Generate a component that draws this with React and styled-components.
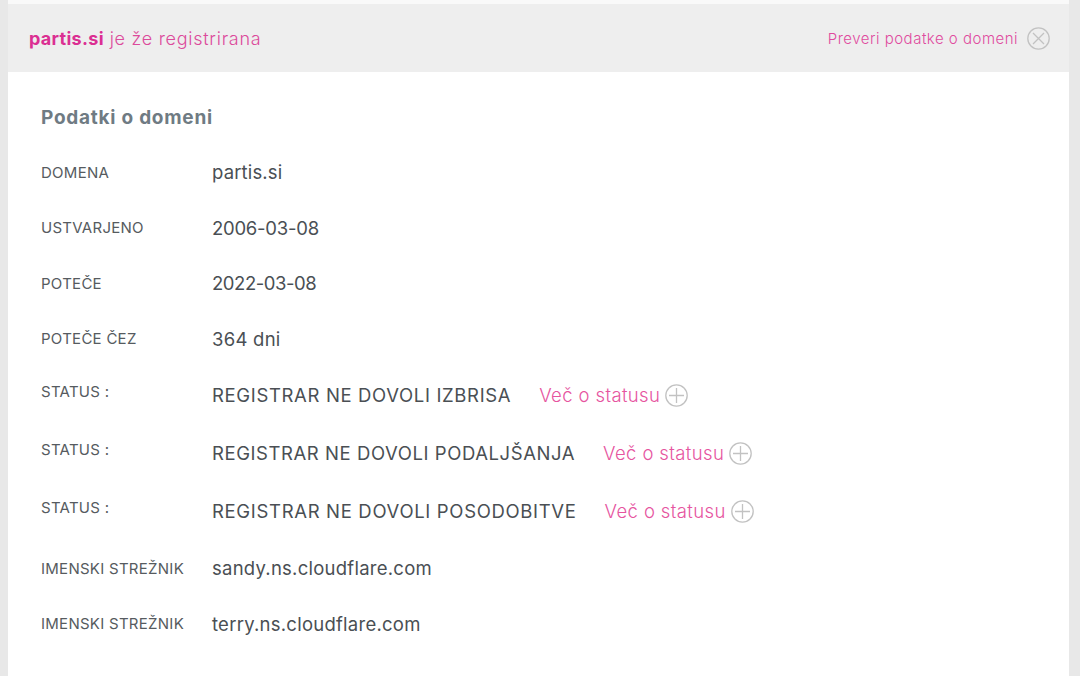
import React from "react";
import styled, { createGlobalStyle } from "styled-components";

const Global = createGlobalStyle`
  html, body { margin: 0; padding: 0; height: 100%; background: #e8e8e8; overflow: hidden; }
  body { font-family: Inter, "Open Sans", "Liberation Sans", sans-serif; }
`;

const Page = styled.div`
  width: 1080px;
  height: 676px;
  padding: 0 11px 0 8px;
  box-sizing: border-box;
  overflow: hidden;
`;

const Panel = styled.div`
  background: #fff;
  height: 676px;
  box-sizing: border-box;
`;

const TopStrip = styled.div`
  height: 4px;
  background: #f9f9f9;
`;

const Header = styled.header`
  height: 68px;
  background: #eeeeee;
  display: flex;
  align-items: center;
  justify-content: space-between;
  padding: 0 19px 0 21px;
`;

const Title = styled.h1`
  margin: 0;
  font-size: 18px;
  font-weight: 300;
  color: #dc4a9b;
  letter-spacing: 0.72px;
  b { font-weight: 700; color: #db2f92; letter-spacing: 0.3px; }
`;

const Toggle = styled.div`
  display: flex;
  align-items: center;
  gap: 9px;
  font-size: 15px;
  font-weight: 300;
  letter-spacing: 0.5px;
  color: #e04a9e;
`;

const Body = styled.div`
  padding: 32px 0 0 33px;
`;

const Heading = styled.h2`
  margin: 0 0 12px;
  font-size: 19px;
  line-height: 28px;
  font-weight: 700;
  letter-spacing: 0.75px;
  color: #6f7b83;
`;

const Row = styled.div`
  display: flex;
  align-items: center;
  height: ${(p) => p.$h}px;
`;

const Label = styled.div`
  width: 171px;
  flex: none;
  font-size: 15px;
  font-weight: 400;
  letter-spacing: 0.27px;
  color: #565b60;
  position: relative;
  top: ${(p) => (p.$status ? -4 : 0)}px;
`;

const Value = styled.div`
  font-size: 18.5px;
  font-weight: 400;
  letter-spacing: ${(p) => p.$sp}px;
  color: #4a4f54;
`;

const More = styled.div`
  display: flex;
  align-items: center;
  gap: 5px;
  margin-left: 28px;
  font-size: 18.5px;
  font-weight: 300;
  letter-spacing: 0.38px;
  color: #e6559f;
`;

const Icon = styled.svg`
  flex: none;
  fill: none;
  stroke: #c2c2c2;
  stroke-width: 1.3;
`;

function RoundIcon({ close }) {
  return (
    <Icon width="23" height="23" viewBox="0 0 23 23">
      <circle cx="11.5" cy="11.5" r="10.7" />
      {close ? <path d="M6 6 17 17M17 6 6 17" /> : <path d="M11.5 4V19M4 11.5H19" />}
    </Icon>
  );
}

const rows = [
  { label: "DOMENA", value: "partis.si", h: 56, sp: 0.15 },
  { label: "USTVARJENO", value: "2006-03-08", h: 55, sp: -0.25 },
  { label: "POTEČE", value: "2022-03-08", h: 56, sp: -0.45 },
  { label: "POTEČE ČEZ", value: "364 dni", h: 55, sp: 0.25 },
  { label: "STATUS :", value: "REGISTRAR NE DOVOLI IZBRISA", status: true, h: 58, sp: 0.65 },
  { label: "STATUS :", value: "REGISTRAR NE DOVOLI PODALJŠANJA", status: true, h: 58, sp: 0.57 },
  { label: "STATUS :", value: "REGISTRAR NE DOVOLI POSODOBITVE", status: true, h: 58, sp: 0.67 },
  { label: "IMENSKI STREŽNIK", value: "sandy.ns.cloudflare.com", h: 56, sp: 0.25 },
  { label: "IMENSKI STREŽNIK", value: "terry.ns.cloudflare.com", h: 55, sp: 0.25 },
];

export default function App() {
  return (
    <Page>
      <Global />
      <Panel>
        <TopStrip />
        <Header>
          <Title><b>partis.si</b> je že registrirana</Title>
          <Toggle>Preveri podatke o domeni <RoundIcon close /></Toggle>
        </Header>
        <Body>
          <Heading>Podatki o domeni</Heading>
          {rows.map((r, i) => (
            <Row key={i} $h={r.h}>
              <Label $status={r.status}>{r.label}</Label>
              <Value $sp={r.sp}>{r.value}</Value>
              {r.status && <More>Več o statusu <RoundIcon /></More>}
            </Row>
          ))}
        </Body>
      </Panel>
    </Page>
  );
}
